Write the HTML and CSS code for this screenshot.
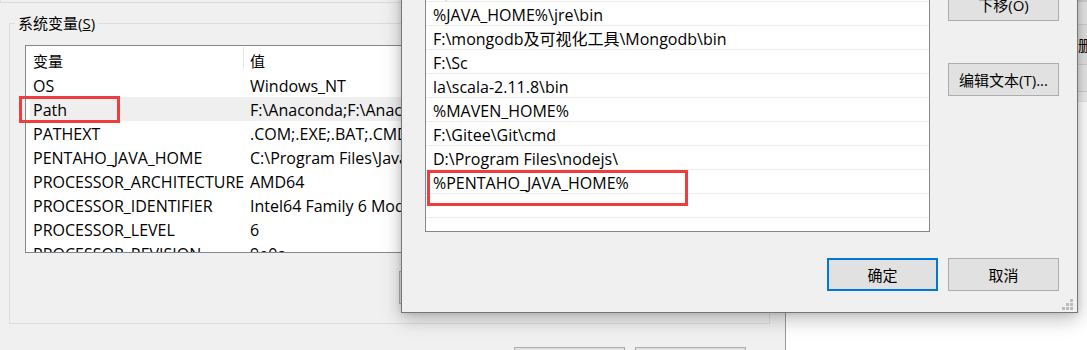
FILE: index.html
```html
<!DOCTYPE html>
<html lang="zh-CN">
  <head>
    <meta charset="UTF-8" />
    <title>编辑环境变量</title>
    <link rel="stylesheet" href="styles.css">
  </head>
  <body>
    <div class="desktop">
      <div class="env-window">
        <div class="user-group"></div>
        <div class="sys-group">
          <span class="group-title">系统变量(<u>S</u>)</span>
          <div class="listview">
            <div class="lv-head">
              <div class="lv-col1">变量</div>
              <div class="lv-col2">值</div>
            </div>
            <div class="lv-row"><div class="lv-col1">OS</div><div class="lv-col2">Windows_NT</div></div>
            <div class="lv-row selected"><div class="lv-col1">Path</div><div class="lv-col2">F:\Anaconda;F:\Anaconda\Library\mingw-w64\bin;F:\Anaconda\Scripts</div></div>
            <div class="lv-row"><div class="lv-col1">PATHEXT</div><div class="lv-col2">.COM;.EXE;.BAT;.CMD;.VBS;.VBE;.JS;.JSE;.WSF;.WSH;.MSC</div></div>
            <div class="lv-row"><div class="lv-col1">PENTAHO_JAVA_HOME</div><div class="lv-col2">C:\Program Files\Java\jdk1.8.0_181</div></div>
            <div class="lv-row"><div class="lv-col1">PROCESSOR_ARCHITECTURE</div><div class="lv-col2">AMD64</div></div>
            <div class="lv-row"><div class="lv-col1">PROCESSOR_IDENTIFIER</div><div class="lv-col2">Intel64 Family 6 Model 158 Stepping 10, GenuineIntel</div></div>
            <div class="lv-row"><div class="lv-col1">PROCESSOR_LEVEL</div><div class="lv-col2">6</div></div>
            <div class="lv-row"><div class="lv-col1">PROCESSOR_REVISION</div><div class="lv-col2">9e0a</div></div>
          </div>
          <div class="group-buttons">
            <button class="btn">新建(W)...</button>
            <button class="btn">编辑(I)...</button>
            <button class="btn">删除(L)</button>
          </div>
        </div>
        <div class="window-buttons">
          <button class="btn">确定</button>
          <button class="btn">取消</button>
        </div>
        <div class="mark mark-path"></div>
      </div>

      <div class="side-window">
        <div class="side-band"></div>
        <div class="side-btn">删除(D)</div>
        <div class="side-band"></div>
        <div class="side-foot"></div>
      </div>

      <div class="edit-dialog">
        <div class="dlg-main">
          <div class="path-list">
            <div class="path-row">%JAVA_HOME%\bin</div>
            <div class="path-row">%JAVA_HOME%\jre\bin</div>
            <div class="path-row">F:\mongodb及可视化工具\Mongodb\bin</div>
            <div class="path-row">F:\Sc</div>
            <div class="path-row">la\scala-2.11.8\bin</div>
            <div class="path-row">%MAVEN_HOME%</div>
            <div class="path-row">F:\Gitee\Git\cmd</div>
            <div class="path-row">D:\Program Files\nodejs\</div>
            <div class="path-row">%PENTAHO_JAVA_HOME%</div>
            <div class="path-row"></div>
            <div class="mark mark-pentaho"></div>
          </div>
          <div class="dlg-side">
            <button class="btn">下移(O)</button>
            <button class="btn btn-gap">编辑文本(T)...</button>
          </div>
        </div>
        <div class="dlg-bottom">
          <button class="btn btn-default">确定</button>
          <button class="btn">取消</button>
        </div>
        <svg class="grip" width="11" height="11" viewBox="0 0 11 11">
          <rect x="8" y="0" width="3" height="3" />
          <rect x="4" y="4" width="3" height="3" />
          <rect x="8" y="4" width="3" height="3" />
          <rect x="0" y="8" width="3" height="3" />
          <rect x="4" y="8" width="3" height="3" />
          <rect x="8" y="8" width="3" height="3" />
        </svg>
      </div>
    </div>
  </body>
</html>
```

FILE: styles.css
```css
* {
  box-sizing: border-box;
}
body {
  margin: 0;
  font-family: "Open Sans", "Noto Sans CJK SC", sans-serif;
  font-size: 15px;
  color: #000;
  background-color: #fff;
}
.desktop {
  position: relative;
  width: 1087px;
  height: 350px;
  overflow: hidden;
}
.btn {
  width: 111px;
  height: 33px;
  padding: 0;
  font-family: inherit;
  font-size: 15px;
  color: #000;
  background-color: #e1e1e1;
  border: 1px solid #adadad;
  border-radius: 0;
  white-space: nowrap;
}
.btn-default {
  border: 2px solid #0078d7;
}
.mark {
  position: absolute;
  border: 3px solid #ef3d3d;
}

/* back window */
.env-window {
  position: absolute;
  left: 0;
  top: 0;
  z-index: 1;
  width: 786px;
  height: 350px;
  background-color: #f0f0f0;
  border-right: 1px solid #9a9a9a;
}
.user-group {
  width: 770px;
  height: 3px;
  border-left: 1px solid #dcdcdc;
  border-bottom: 1px solid #dcdcdc;
}
.sys-group {
  position: relative;
  width: 761px;
  height: 301px;
  margin: 20px 0 0 9px;
  padding: 21px 0 0 15px;
  border: 1px solid #dcdcdc;
}
.group-title {
  position: absolute;
  left: 5px;
  top: -12px;
  padding: 0 3px;
  line-height: 22px;
  background-color: #f0f0f0;
}
.listview {
  width: 730px;
  height: 208px;
  overflow: hidden;
  background-color: #fff;
  border: 1px solid #828790;
}
.lv-head,
.lv-row {
  display: grid;
  grid-template-columns: 214px 1fr;
  padding-left: 4px;
  white-space: nowrap;
}
.lv-head {
  height: 27px;
  line-height: 30px;
  background: linear-gradient(#e5e5e5, #e5e5e5) 217px 1px / 1px 22px no-repeat;
}
.lv-row {
  height: 24px;
  line-height: 26px;
  font-size: 16px;
}
.lv-row.selected {
  background-color: #efefef;
  background-clip: content-box;
}
.lv-col1 {
  padding-left: 3px;
  overflow: hidden;
}
.lv-col2 {
  padding-left: 6px;
}
.group-buttons {
  display: flex;
  gap: 10px;
  margin: 18px 0 0 374px;
}
.window-buttons {
  display: flex;
  gap: 10px;
  margin-top: 23px;
  padding-left: 514px;
}
.mark-path {
  left: 19px;
  top: 96px;
  width: 101px;
  height: 27px;
}

/* window peeking out on the right */
.side-window {
  position: absolute;
  left: 1060px;
  top: 0;
  z-index: 1;
  width: 60px;
  height: 102px;
  background-color: #e6e6e6;
  border-top: 2px solid #d0d0d0;
}
.side-band {
  height: 23px;
  border-bottom: 1px solid #cfcfcf;
}
.side-btn {
  height: 40px;
  padding-left: 18px;
  line-height: 40px;
  white-space: nowrap;
  background-color: #e1e1e1;
  border-bottom: 1px solid #cfcfcf;
}
.side-band + .side-btn + .side-band {
  height: 27px;
}
.side-foot {
  height: 9px;
  background-color: #eeeeee;
}

/* edit environment variable dialog */
.edit-dialog {
  position: absolute;
  left: 401px;
  top: -33px;
  z-index: 2;
  width: 677px;
  height: 346px;
  padding: 9px 18px 0 23px;
  background-color: #f0f0f0;
  border: 1px solid #767676;
  box-shadow: 0 6px 18px rgba(0, 0, 0, 0.26), 0 0 6px rgba(0, 0, 0, 0.12);
}
.dlg-main {
  display: flex;
  gap: 18px;
}
.path-list {
  position: relative;
  width: 505px;
  height: 255px;
  overflow: hidden;
  background-color: #fff;
  border: 1px solid #828790;
}
.path-row {
  height: 24px;
  padding-left: 7px;
  line-height: 26px;
  font-size: 16px;
  white-space: nowrap;
  border-bottom: 1px solid #ececec;
}
.mark-pentaho {
  left: 1px;
  top: 192px;
  width: 261px;
  height: 36px;
}
.dlg-side {
  display: flex;
  flex-direction: column;
  width: 111px;
  padding-top: 11px;
}
.btn-gap {
  margin-top: 42px;
}
.dlg-bottom {
  display: flex;
  justify-content: flex-end;
  gap: 10px;
  margin-top: 26px;
}
.grip {
  position: absolute;
  right: 4px;
  bottom: 2px;
  fill: #bcbcbc;
}
```
